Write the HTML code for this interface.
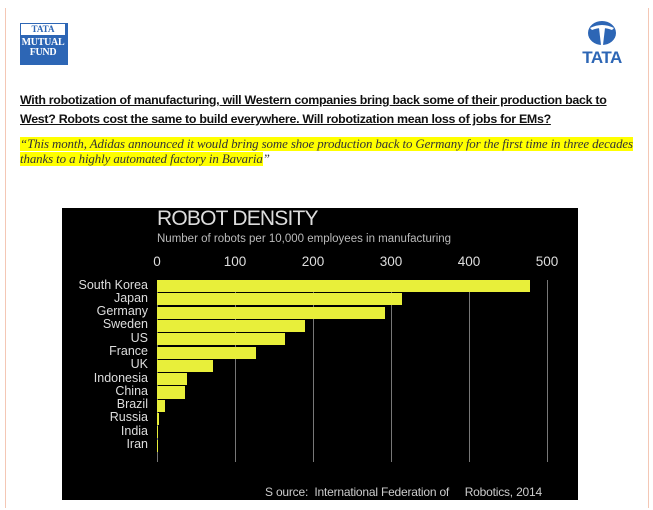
<!DOCTYPE html>
<html><head><style>
body{margin:0;width:653px;height:510px;background:#fff;position:relative;overflow:hidden;font-family:"Liberation Sans",sans-serif}
.a{position:absolute}
.h{font-weight:bold;font-size:12.4px;color:#111;text-decoration:underline;left:20px;white-space:nowrap;letter-spacing:-0.28px}
.q{font-family:"Liberation Serif",serif;font-style:italic;font-size:12.9px;color:#333;left:20px;white-space:nowrap;letter-spacing:-0.1px}
.q span{background:#ffff00}
.lab{position:absolute;right:505px;font-size:12.5px;color:#ddd;text-align:right;white-space:nowrap}
.bar{position:absolute;left:157px;height:12.2px;background:#e8ef3a}
.g{position:absolute;top:280px;height:182px;width:1px;background:#777}
.t{position:absolute;top:254px;font-size:13.5px;color:#ddd;width:40px;text-align:center}
</style></head><body>
<div class="a" style="left:5px;top:8px;width:1px;height:500px;background:#f4c7b5"></div>
<div class="a" style="left:648px;top:8px;width:1px;height:500px;background:#f4c7b5"></div>
<div class="a" style="left:20px;top:23px;width:46px;height:40px;background:#2d66b5;border:1px solid #2d66b5"></div>
<div class="a" style="left:21px;top:24px;width:44px;height:11px;background:#fff;color:#2d66b5;font:bold 9px 'Liberation Serif',serif;text-align:center;line-height:11px">TATA</div>
<div class="a" style="left:20px;top:38px;width:46px;color:#fff;font:bold 10px/10px 'Liberation Serif',serif;text-align:center;letter-spacing:-0.3px">MUTUAL<br>FUND</div>
<svg class="a" style="left:576px;top:20px" width="52" height="46" viewBox="0 0 52 46">
<ellipse cx="26" cy="13" rx="14" ry="12" fill="#2d66b5"/>
<path d="M14 8 Q26 2 38 8 L36 10 Q26 6 16 10Z" fill="#fff"/>
<path d="M23 8 L29 8 L27 25 L25 25Z" fill="#fff"/>
<text x="26" y="43" text-anchor="middle" font-family="Liberation Sans" font-weight="bold" font-size="17" fill="#2d66b5" letter-spacing="-0.5">TATA</text>
</svg>
<div class="a h" style="top:93px">With robotization of manufacturing, will Western companies bring back some of their production back to</div>
<div class="a h" style="top:112px">West? Robots cost the same to build everywhere. Will robotization mean loss of jobs for EMs?</div>
<div class="a q" style="top:137px"><span>“This month, Adidas announced it would bring some shoe production back to Germany for the first time in three decades</span></div>
<div class="a q" style="top:152px"><span>thanks to a highly automated factory in Bavaria</span>”</div>
<div class="a" style="left:62px;top:208px;width:516px;height:292px;background:#000"></div>
<div class="a" style="left:157px;top:207px;font-size:21px;color:#ddd;letter-spacing:-0.8px">ROBOT DENSITY</div>
<div class="a" style="left:157px;top:233px;font-size:11.5px;color:#bbb">Number of robots per 10,000 employees in manufacturing</div>
<div class="t" style="left:137px">0</div><div class="t" style="left:215px">100</div><div class="t" style="left:293px">200</div><div class="t" style="left:371px">300</div><div class="t" style="left:449px">400</div><div class="t" style="left:527px">500</div>
<div class="g" style="left:157px"></div><div class="g" style="left:235px"></div><div class="g" style="left:313px"></div><div class="g" style="left:391px"></div><div class="g" style="left:469px"></div><div class="g" style="left:547px"></div>
<div class="bar" style="top:280px;width:373px"></div>
<div class="bar" style="top:293.3px;width:245px"></div>
<div class="bar" style="top:306.6px;width:228px"></div>
<div class="bar" style="top:319.9px;width:148px"></div>
<div class="bar" style="top:333.2px;width:128px"></div>
<div class="bar" style="top:346.5px;width:99px"></div>
<div class="bar" style="top:359.8px;width:56px"></div>
<div class="bar" style="top:373.1px;width:30px"></div>
<div class="bar" style="top:386.4px;width:28px"></div>
<div class="bar" style="top:399.7px;width:8px"></div>
<div class="bar" style="top:413px;width:2px"></div>
<div class="bar" style="top:426.3px;width:1px"></div>
<div class="bar" style="top:439.6px;width:1px"></div>
<div class="lab" style="top:278px">South Korea</div>
<div class="lab" style="top:291px">Japan</div>
<div class="lab" style="top:304px">Germany</div>
<div class="lab" style="top:317px">Sweden</div>
<div class="lab" style="top:331px">US</div>
<div class="lab" style="top:344px">France</div>
<div class="lab" style="top:357px">UK</div>
<div class="lab" style="top:371px">Indonesia</div>
<div class="lab" style="top:384px">China</div>
<div class="lab" style="top:397px">Brazil</div>
<div class="lab" style="top:410px">Russia</div>
<div class="lab" style="top:424px">India</div>
<div class="lab" style="top:437px">Iran</div>
<div class="a" style="left:265px;top:485px;font-size:12px;color:#ccc;white-space:nowrap;letter-spacing:-0.2px">S ource:&nbsp; International Federation of &nbsp;&nbsp;&nbsp; Robotics, 2014</div>
</body></html>
